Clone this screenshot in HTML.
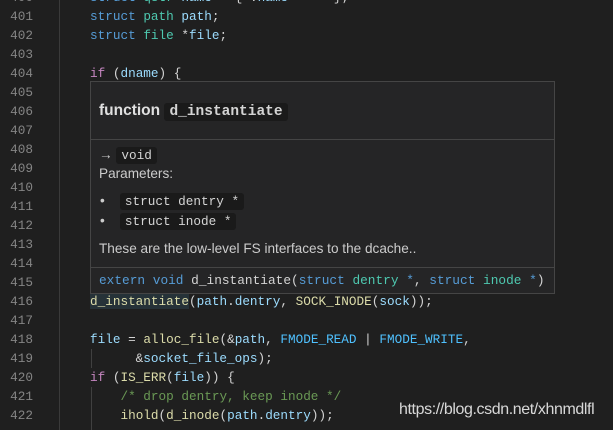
<!DOCTYPE html>
<html><head><meta charset="utf-8"><style>
body{margin:0;width:613px;height:430px;overflow:hidden;background:#1f1f1f;position:relative;font-family:"Liberation Mono",monospace;font-size:12.7px;}
.ln{position:absolute;left:0;width:33px;text-align:right;color:#858585;height:19px;line-height:19px;}
.c{position:absolute;left:90px;color:#d4d4d4;white-space:pre;height:19px;line-height:19px;}
.gut{position:absolute;left:59px;top:0;width:1px;height:430px;background:#3a3a3a;}
.k{color:#569cd6}.t{color:#4ec9b0}.v{color:#9cdcfe}.f{color:#dcdcaa}.p{color:#c586c0}.m{color:#4fc1ff}.cm{color:#6a9955}.s{color:#ce9178}
.tip{position:absolute;left:90px;top:81px;width:463px;height:211px;background:#252526;border:1px solid #454545;font-family:"Liberation Sans",sans-serif;color:#cccccc;font-size:13.6px;}
.code{font-family:"Liberation Mono",monospace;font-size:12.7px;background:#1a1a1a;border-radius:3px;padding:1px 5px;color:#d4d4d4;}
.sep{position:absolute;left:0;right:0;height:1px;background:#454545;}
.ig{position:absolute;width:1px;background:#404040;}
</style></head><body>
<div class="gut"></div>
<div class="ln" style="top:-12px">400</div><div class="c" style="top:-12px"><span class="k">struct</span> <span class="t">qstr</span> <span class="v">name</span> = { .<span class="v">name</span> = <span class="s">""</span> };</div>
<div class="ln" style="top:7px">401</div><div class="c" style="top:7px"><span class="k">struct</span> <span class="t">path</span> <span class="v">path</span>;</div>
<div class="ln" style="top:26px">402</div><div class="c" style="top:26px"><span class="k">struct</span> <span class="t">file</span> *<span class="v">file</span>;</div>
<div class="ln" style="top:45px">403</div>
<div class="ln" style="top:64px">404</div><div class="c" style="top:64px"><span class="p">if</span> (<span class="v">dname</span>) {</div>
<div class="ln" style="top:83px">405</div>
<div class="ln" style="top:102px">406</div>
<div class="ln" style="top:121px">407</div>
<div class="ln" style="top:140px">408</div>
<div class="ln" style="top:159px">409</div>
<div class="ln" style="top:178px">410</div>
<div class="ln" style="top:197px">411</div>
<div class="ln" style="top:216px">412</div>
<div class="ln" style="top:235px">413</div>
<div class="ln" style="top:254px">414</div>
<div class="ln" style="top:273px">415</div>
<div class="ln" style="top:292px">416</div><div class="c" style="top:292px"><span class="f" style="background:#263238">d_instantiate</span>(<span class="v">path</span>.<span class="v">dentry</span>, <span class="f">SOCK_INODE</span>(<span class="v">sock</span>));</div>
<div class="ln" style="top:311px">417</div>
<div class="ln" style="top:330px">418</div><div class="c" style="top:330px"><span class="v">file</span> = <span class="f">alloc_file</span>(&amp;<span class="v">path</span>, <span class="m">FMODE_READ</span> | <span class="m">FMODE_WRITE</span>,</div>
<div class="ln" style="top:349px">419</div><div class="c" style="top:349px">      &amp;<span class="v">socket_file_ops</span>);</div>
<div class="ln" style="top:368px">420</div><div class="c" style="top:368px"><span class="p">if</span> (<span class="f">IS_ERR</span>(<span class="v">file</span>)) {</div>
<div class="ln" style="top:387px">421</div><div class="c" style="top:387px">    <span class="cm">/* drop dentry, keep inode */</span></div>
<div class="ln" style="top:406px">422</div><div class="c" style="top:406px">    <span class="f">ihold</span>(<span class="f">d_inode</span>(<span class="v">path</span>.<span class="v">dentry</span>));</div>
<div class="ig" style="left:91px;top:349px;height:19px"></div>
<div class="ig" style="left:91px;top:387px;height:43px"></div>
<div class="tip">
 <div style="position:absolute;left:8px;top:20px;font-weight:bold;font-size:15.5px;color:#e0e0e0">function <span class="code" style="font-weight:bold;font-size:14.5px">d_instantiate</span></div>
 <div class="sep" style="top:57px"></div>
 <div style="position:absolute;left:8px;top:65px">→ <span class="code">void</span></div>
 <div style="position:absolute;left:8px;top:84px">Parameters:</div>
 <div style="position:absolute;left:9px;top:111px">•&nbsp;&nbsp;&nbsp; <span class="code">struct dentry *</span></div>
 <div style="position:absolute;left:9px;top:131px">•&nbsp;&nbsp;&nbsp; <span class="code">struct inode *</span></div>
 <div style="position:absolute;left:8px;top:159px">These are the low-level FS interfaces to the dcache..</div>
 <div class="sep" style="top:185px"></div>
 <div style="position:absolute;left:8px;top:191px;font-family:'Liberation Mono',monospace;font-size:12.8px;white-space:pre;color:#d4d4d4"><span class="k">extern</span> <span class="k">void</span> d_instantiate(<span class="k">struct</span> <span class="t">dentry</span> <span class="k">*</span>, <span class="k">struct</span> <span class="t">inode</span> <span class="k">*</span>)</div>
</div>
<div style="position:absolute;left:399px;top:401px;font-family:'Liberation Sans',sans-serif;font-size:16px;color:#d8d8d8;letter-spacing:-0.4px">https://blog.csdn.net/xhnmdlfl</div>
</body></html>
